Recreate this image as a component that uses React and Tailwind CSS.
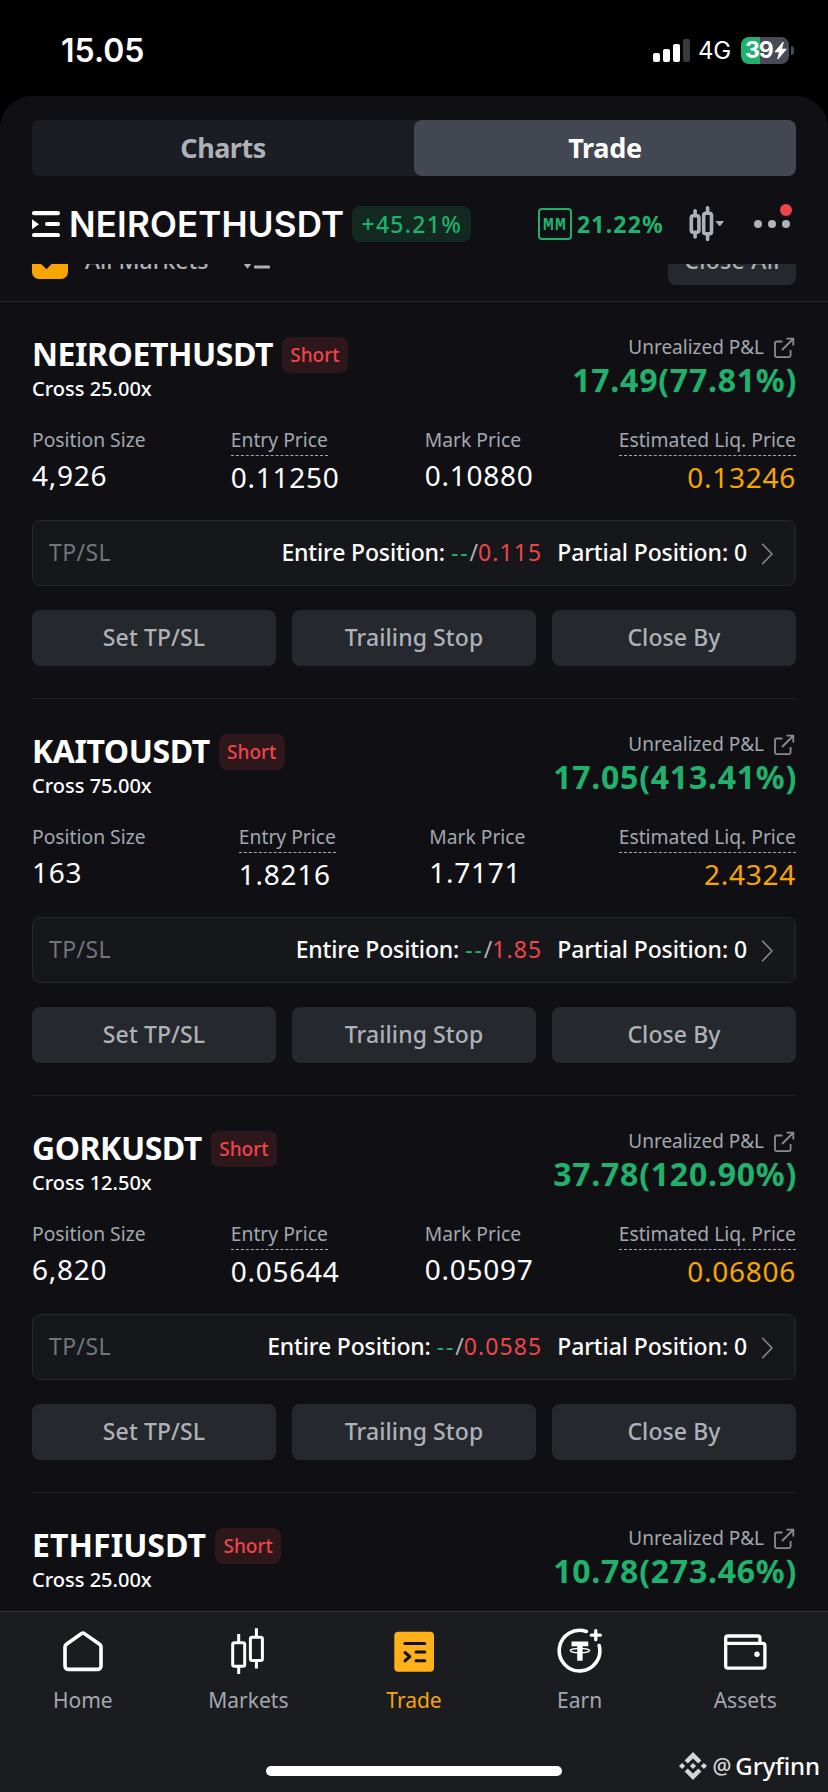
import clsx from "clsx";

const positions = [
  {
    symbol: "NEIROETHUSDT",
    leverage: "25.00x",
    pnl: "17.49(77.81%)",
    size: "4,926",
    entry: "0.11250",
    mark: "0.10880",
    liq: "0.13246",
    sl: "0.115",
  },
  {
    symbol: "KAITOUSDT",
    leverage: "75.00x",
    pnl: "17.05(413.41%)",
    size: "163",
    entry: "1.8216",
    mark: "1.7171",
    liq: "2.4324",
    sl: "1.85",
  },
  {
    symbol: "GORKUSDT",
    leverage: "12.50x",
    pnl: "37.78(120.90%)",
    size: "6,820",
    entry: "0.05644",
    mark: "0.05097",
    liq: "0.06806",
    sl: "0.0585",
  },
];

const nextPosition = {
  symbol: "ETHFIUSDT",
  leverage: "25.00x",
  pnl: "10.78(273.46%)",
  symbolClass: "tracking-[0.05px]",
};

function HomeIcon() {
  return (
    <svg width="48" height="48" viewBox="0 0 48 48" fill="none" stroke="#fff" strokeWidth="3.6" strokeLinejoin="round">
      <path d="M22.6 6.6a2.4 2.4 0 0 1 2.8 0L40.6 17.2a3 3 0 0 1 1.4 2.5V39a3.4 3.4 0 0 1-3.4 3.4H9.4A3.4 3.4 0 0 1 6 39V19.7a3 3 0 0 1 1.4-2.5z" />
    </svg>
  );
}

function MarketsIcon() {
  return (
    <svg width="48" height="48" viewBox="0 0 48 48" fill="none" stroke="#fff" strokeWidth="3">
      <rect x="8.7" y="15.8" width="12" height="23.4" rx="1.8" />
      <rect x="26.4" y="10.2" width="12" height="23.4" rx="1.8" />
      <path d="M14.7 7v8.5M14.7 39.5v7.5M32.4 1.2v8.5M32.4 34v7.5" />
    </svg>
  );
}

function TradeIcon() {
  return (
    <svg width="48" height="48" viewBox="0 0 48 48" fill="none" stroke="#121214" strokeWidth="3" strokeLinecap="round" strokeLinejoin="round">
      <rect x="4.3" y="4.8" width="39.7" height="40" rx="4" fill="#ffb11a" stroke="none" />
      <path d="M14.8 16.4h20M26 25h8.8M26 33.7h8.8M15 25.5l4.8 4.2-4.8 4.2" />
    </svg>
  );
}

function EarnIcon() {
  return (
    <svg width="48" height="48" viewBox="0 0 48 48" fill="none" stroke="#fff" strokeWidth="3.6" strokeLinecap="round">
      <path d="M30.3 4.5A20.3 20.3 0 1 0 43.2 18.6" />
      <path d="M39.8 3.7v9M35.3 8.2h9" strokeWidth="3.3" />
      <path d="M15.5 14.6h16.8v4.6h-5.7v14.6h-5.4V19.2h-5.7z" fill="#fff" stroke="none" />
      <ellipse cx="23.9" cy="23.6" rx="9.7" ry="2.2" strokeWidth="1.3" />
    </svg>
  );
}

function AssetsIcon() {
  return (
    <svg width="48" height="48" viewBox="0 0 48 48" fill="none" stroke="#fff" strokeWidth="3.3" strokeLinejoin="round">
      <path d="M4.7 16.4h37.2a2 2 0 0 1 2 2v21a1.8 1.8 0 0 1-1.8 1.8H6.5a1.8 1.8 0 0 1-1.8-1.8V11a2 2 0 0 1 2-2h30.2a2 2 0 0 1 2 2v5.4" />
      <circle cx="36" cy="27.2" r="2.7" fill="#fff" stroke="none" />
    </svg>
  );
}

const tabs = [
  { name: "Home", Icon: HomeIcon },
  { name: "Markets", Icon: MarketsIcon },
  { name: "Trade", Icon: TradeIcon },
  { name: "Earn", Icon: EarnIcon },
  { name: "Assets", Icon: AssetsIcon },
];

function StatusBar() {
  return (
    <div className="flex h-24 shrink-0 items-center justify-between bg-black pt-[4px] pr-[34px] pl-[61px] font-['Inter',sans-serif]">
      <span className="mt-px text-[32px] leading-10 font-semibold">15.05</span>
      <div className="flex items-center">
        <svg width="37" height="23" viewBox="0 0 37 23" fill="#fff">
          <rect x="0" y="14" width="7" height="9" rx="2" />
          <rect x="10" y="10" width="7" height="13" rx="2" />
          <rect x="20" y="5" width="7" height="18" rx="2" />
          <rect x="30" y="0" width="7" height="23" rx="2" fill="#3a3a3c" />
        </svg>
        <span className="mt-[2px] ml-[8px] text-[24px] leading-7 tracking-[-0.2px]">4G</span>
        <div className="ml-[10px] flex h-[27px] w-12 items-center rounded-[8px] bg-[linear-gradient(90deg,#20b26c_19px,#474b57_19px)] pl-[4px]">
          <span className="text-[23px] leading-[27px] font-bold tracking-[-1.2px]">39</span>
          <svg className="ml-[2px]" width="13" height="19" viewBox="0 0 13 19" fill="#fff" stroke="#fff" strokeLinejoin="round">
            <path d="M9.3 1L1 10.8h4.6L3.8 18l8.4-9.8H7.4z" />
          </svg>
        </div>
        <div className="ml-[2px] h-[9px] w-[3px] rounded-r-full bg-[#474b57]" />
      </div>
    </div>
  );
}

function Header() {
  return (
    <div className="h-[168px] shrink-0 bg-black">
      <div className="h-full rounded-t-[32px] bg-[#101014] px-8 pt-6">
        <div className="grid h-14 grid-cols-2 rounded-lg bg-[#1b1d22] text-[27px] font-bold">
          <div className="flex items-center justify-center tracking-[-0.5px] text-[#adb1b8]">Charts</div>
          <div className="flex items-center justify-center rounded-lg bg-[#434751] tracking-[-0.3px]">Trade</div>
        </div>

        <div className="mt-[30px] flex h-9 items-center">
          <svg width="28" height="26" viewBox="0 0 28 26" fill="#fff">
            <rect x="0" y="0" width="28" height="4.3" rx="2.1" />
            <rect x="13" y="11" width="15" height="4" rx="2" />
            <rect x="0" y="22" width="28" height="4.2" rx="2.1" />
            <path d="M0 8.2l7 5-7 5z" />
          </svg>
          <span className="ml-[9px] font-['Inter',sans-serif] text-[35px] leading-9 font-semibold tracking-[0.16px]">
            NEIROETHUSDT
          </span>
          <span className="ml-[8px] flex h-9 w-[119px] items-center justify-center rounded-lg bg-[#11291f] text-[23px] font-medium tracking-[1.3px] text-[#20b26c]">
            +45.21%
          </span>

          <div className="ml-auto flex items-center text-[#20b26c]">
            <span className="flex h-8 w-[34px] items-center justify-center rounded-[4px] border-2 border-[#20b26c] pt-[2px] font-['Liberation_Mono',monospace] text-[18px] font-bold tracking-[1.2px]">
              MM
            </span>
            <span className="ml-[5px] text-[23px] leading-8 font-bold tracking-[1.2px]">21.22%</span>
          </div>
          <svg className="ml-[25px]" width="35" height="36" viewBox="0 0 35 36" fill="none" stroke="#adb1b8" strokeWidth="3.6" strokeLinecap="round">
            <rect x="2.3" y="9.8" width="7.6" height="16.4" rx="2" />
            <rect x="14.7" y="7.2" width="7.8" height="20.6" rx="2" />
            <path d="M6.1 4.8v4.5M6.1 27v4M18.6 1.8v4.5M18.6 29v4.5" />
            <path d="M27.5 15.5h6.8l-3.4 4.2z" fill="#adb1b8" strokeWidth="1" strokeLinejoin="round" />
          </svg>
          <div className="relative mr-[6px] ml-[30px] flex items-center gap-[6px]">
            <i className="size-2 rounded-full bg-[#adb1b8]" />
            <i className="size-2 rounded-full bg-[#adb1b8]" />
            <i className="size-2 rounded-full bg-[#adb1b8]" />
            <i className="absolute -top-[16px] -right-[2px] size-3 rounded-full bg-[#ef454a]" />
          </div>
        </div>
      </div>
    </div>
  );
}

// filter row, partly scrolled under the header
function FilterRow() {
  return (
    <div className="h-[38px] shrink-0 overflow-hidden border-b border-[#25282c]">
      <div className="-mt-[27px] flex h-12 items-center px-8 text-[23px] font-medium text-[#adb1b8]">
        <span className="size-9 rounded-[7px] bg-[#f7a600]">
          <svg width="36" height="36" viewBox="0 0 36 36" fill="none" stroke="#101014" strokeWidth="4.5">
            <path d="M6.5 15.5l8 7.5L28 9.5" />
          </svg>
        </span>
        <span className="ml-[17px] pb-px">All Markets</span>
        <svg className="ml-[34px]" width="28" height="20" viewBox="0 0 28 20" fill="#adb1b8">
          <path d="M3 0h3v12h3l-4.500 5.800L0 12h3z" />
          <rect x="11" y="14.5" width="16" height="3" rx="1" />
        </svg>
        <span className="ml-auto flex h-12 w-32 items-center justify-center rounded-lg bg-[#25282c] pb-px tracking-[0.3px]">
          Close All
        </span>
      </div>
    </div>
  );
}

function Stat({ label, value, underlined, className = "items-start" }) {
  return (
    <div className={clsx("flex flex-col", className)}>
      <p
        className={clsx(
          "pt-px text-[19.3px] leading-6 text-[#a3a7ae]",
          underlined && "h-[29px] border-b border-dashed border-[#a3a7ae]"
        )}
      >
        {label}
      </p>
      <p className={clsx("text-[28px] leading-8 tracking-[0.74px]", underlined ? "mt-[5px]" : "mt-[7px]")}>
        {value}
      </p>
    </div>
  );
}

function PositionHeader({ item }) {
  return (
    <div className="flex shrink-0 justify-between">
      <div className="pt-[35px]">
        <div className="flex gap-[9px]">
          <span className={clsx("text-[32px] leading-[34px] font-bold", item.symbolClass || "tracking-[-0.45px]")}>
            {item.symbol}
          </span>
          <span className="flex h-9 w-[66px] items-center justify-center rounded-lg bg-[#2d171b] text-[19px] font-medium text-[#ef454a]">
            Short
          </span>
        </div>
        <p className="mt-[4px] text-[20px] leading-6 font-medium">Cross {item.leverage}</p>
      </div>
      <div className="flex flex-col items-end pt-[33px]">
        <div className="flex h-6 items-center text-[19px] leading-6 text-[#a3a7ae]">
          Unrealized P&L
          <svg className="mt-px mr-[1px] ml-[9px]" width="22" height="22" viewBox="0 0 22 22" fill="none" stroke="#888b92" strokeWidth="1.8">
            <path d="M9.5 4.5H3.8A1.8 1.8 0 0 0 2 6.3v12A1.8 1.8 0 0 0 3.8 20.1h12a1.8 1.8 0 0 0 1.8-1.8v-5.3" />
            <path d="M13.5 1.7h6.8v6.8M20 2L9 13" />
          </svg>
        </div>
        <p className="mt-[3px] -mr-px text-[32px] leading-9 font-bold tracking-[0.75px] text-[#20b26c]">{item.pnl}</p>
      </div>
    </div>
  );
}

function Position({ item }) {
  return (
    <div className="mx-8 h-[397px] shrink-0 border-b border-[#212327]">
      <PositionHeader item={item} />

      <div className="mt-[26px] flex h-[68px] justify-between">
        <Stat label="Position Size" value={item.size} />
        <Stat label="Entry Price" value={item.entry} underlined />
        <Stat label="Mark Price" value={item.mark} />
        <Stat label="Estimated Liq. Price" value={item.liq} underlined className="items-end [&>p:last-child]:text-[#f7a600]" />
      </div>

      <div className="mt-[25px] flex h-[66px] items-center rounded-lg border border-[#25282c] bg-[#16171a] pr-[22px] pb-[2px] pl-4 text-[23px]">
        <span className="tracking-[0.4px] text-[#71757a]">TP/SL</span>
        <span className="ml-auto font-medium tracking-[-0.15px]">Entire Position:</span>
        <span className="ml-[6px] tracking-[1.8px] text-[#20b26c]">--</span>
        <span className="text-[#adb1b8]">/</span>
        <span className="tracking-[1.1px] text-[#ef454a]">{item.sl}</span>
        <span className="ml-[15px] font-medium tracking-[-0.1px]">Partial Position: 0</span>
        <svg className="mt-[3px] ml-[14px]" width="12" height="22" viewBox="0 0 12 22" fill="none" stroke="#888b92" strokeWidth="1.5">
          <path d="M1.2 0.8L11 11 1.2 21.2" />
        </svg>
      </div>

      <div className="mt-6 grid grid-cols-3 gap-4">
        {["Set TP/SL", "Trailing Stop", "Close By"].map((label) => (
          <button key={label} className="h-14 rounded-lg bg-[#25282c] pb-[2px] text-[23px] font-medium tracking-[0.1px] text-[#adb1b8]">
            {label}
          </button>
        ))}
      </div>
    </div>
  );
}

function BottomNav() {
  return (
    <div className="relative flex h-[181px] shrink-0 flex-col border-t border-[#36383d] bg-[#1b1c20]">
      <div className="grid grid-cols-5 pt-[15px]">
        {tabs.map(({ name, Icon }) => (
          <div key={name} className="flex flex-col items-center">
            <Icon />
            <span className={clsx("mt-[11px] text-[21px] leading-7", name === "Trade" ? "text-[#f7a600]" : "text-[#a3a7ae]")}>
              {name}
            </span>
          </div>
        ))}
      </div>
      <div className="mx-auto mt-auto mb-4 h-[10px] w-[296px] rounded-full bg-white" />

      {/* author tag */}
      <div className="absolute right-[8px] bottom-[10px] flex items-center text-[24px] leading-8 font-medium">
        <svg width="28" height="28" viewBox="0 0 28 28" fill="#d5d5d5">
          <path d="M14 0l8.4 8.4-3.2 3.2L14 6.4l-5.2 5.2-3.2-3.2z" />
          <path d="M14 28l8.4-8.4-3.2-3.2L14 21.6l-5.2-5.2-3.2 3.2z" />
          <path d="M14 10.9l3.1 3.1-3.1 3.1-3.1-3.1zM3.1 10.9L6.2 14l-3.1 3.1L0 14zM24.9 10.9L28 14l-3.1 3.1-3.1-3.1z" />
        </svg>
        <span className="ml-[5px] text-[21px] text-[#d5d5d5]">@</span>
        <span className="ml-[4px] tracking-[-0.1px]">Gryfinn</span>
      </div>
    </div>
  );
}

export default function App() {
  return (
    <div className="flex h-[1792px] w-[828px] flex-col overflow-hidden bg-[#101014] font-['Noto_Sans',sans-serif] text-white">
      <StatusBar />
      <Header />
      <FilterRow />
      <div className="flex min-h-0 flex-1 flex-col overflow-hidden">
        {positions.map((item) => (
          <Position key={item.symbol} item={item} />
        ))}
        <div className="px-8">
          <PositionHeader item={nextPosition} />
        </div>
      </div>
      <BottomNav />
    </div>
  );
}
